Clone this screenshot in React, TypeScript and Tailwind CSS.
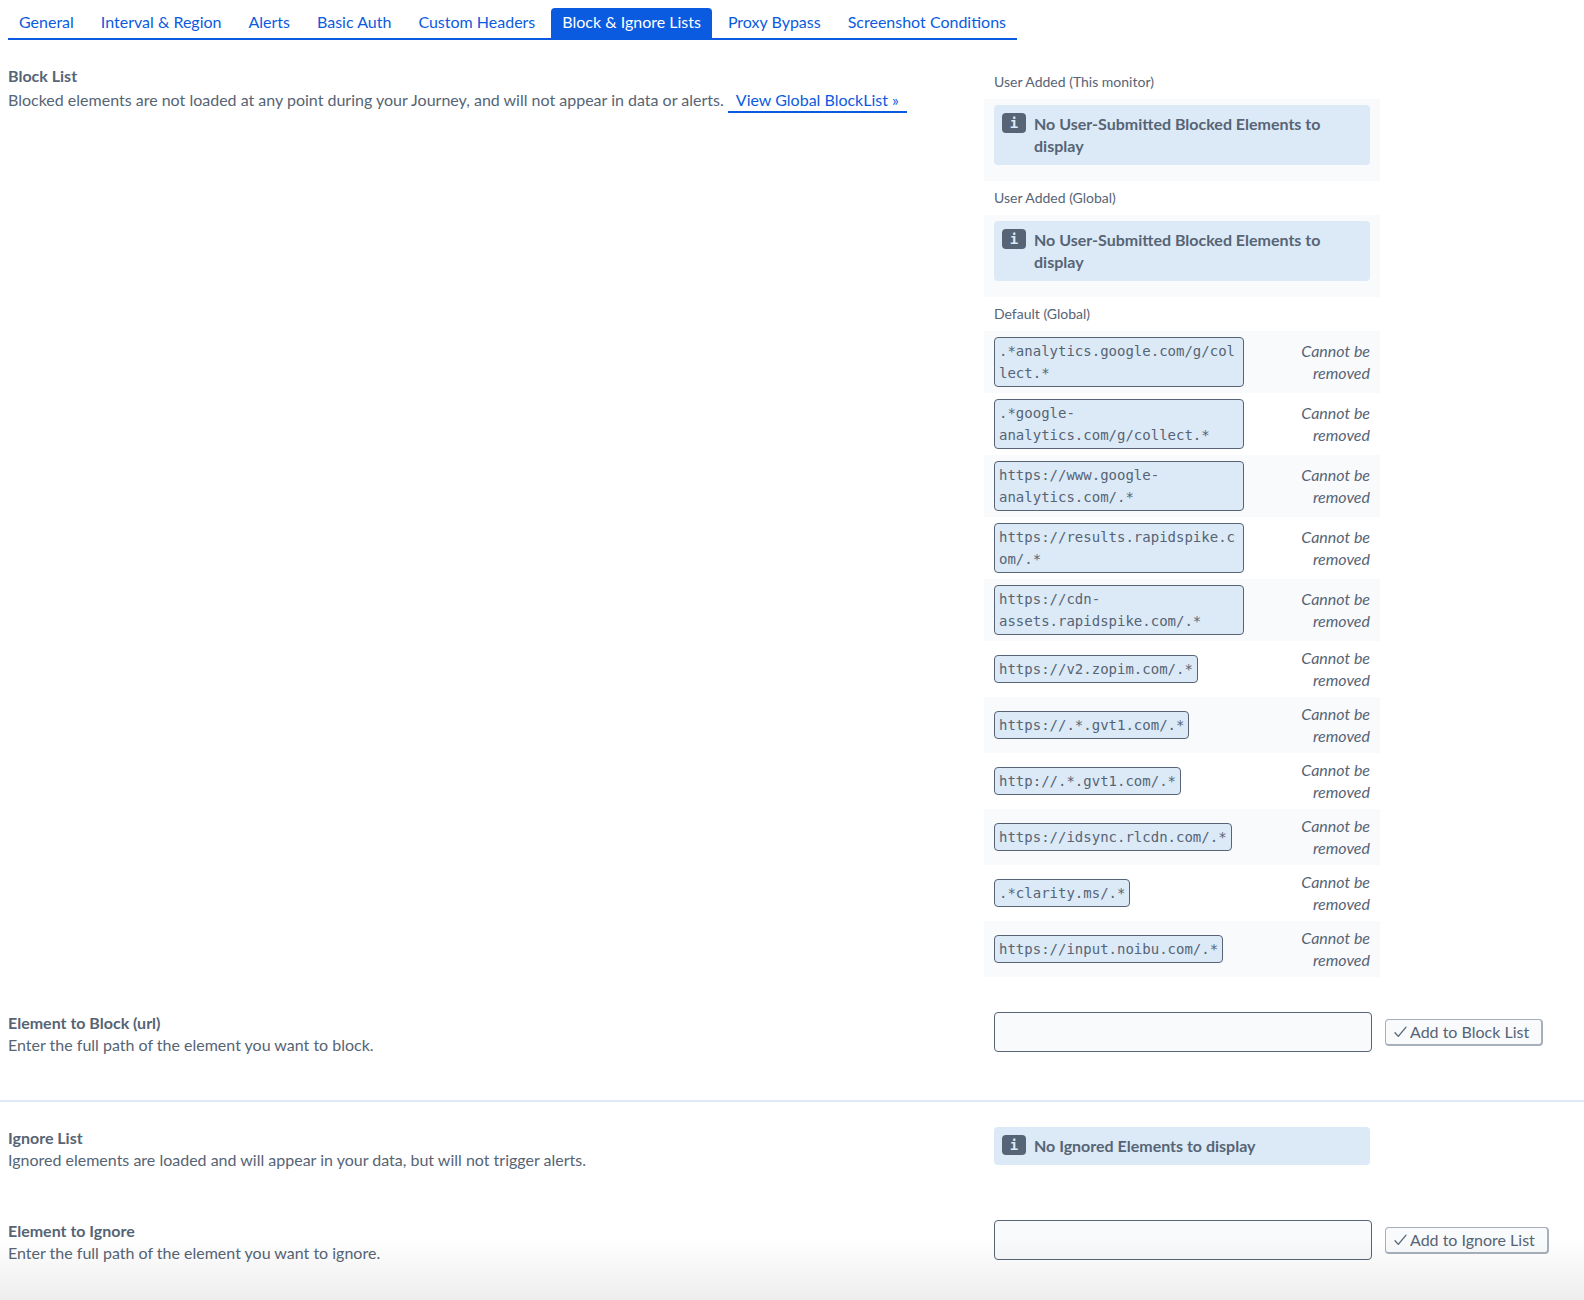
import React, { useState } from "react";

const TABS = [
  "General",
  "Interval & Region",
  "Alerts",
  "Basic Auth",
  "Custom Headers",
  "Block & Ignore Lists",
  "Proxy Bypass",
  "Screenshot Conditions",
];

const DEFAULT_BLOCKS = [
  ".*analytics.google.com/g/collect.*",
  ".*google-analytics.com/g/collect.*",
  "https://www.google-analytics.com/.*",
  "https://results.rapidspike.com/.*",
  "https://cdn-assets.rapidspike.com/.*",
  "https://v2.zopim.com/.*",
  "https://.*.gvt1.com/.*",
  "http://.*.gvt1.com/.*",
  "https://idsync.rlcdn.com/.*",
  ".*clarity.ms/.*",
  "https://input.noibu.com/.*",
];

function InfoAlert({ children }: { children: React.ReactNode }): React.ReactElement {
  return (
    <div className="flex items-start gap-2 rounded bg-[#dceaf7] p-2 font-bold">
      <span
        className="flex h-5 w-6 shrink-0 items-center justify-center rounded bg-[#566475] font-['DejaVu_Sans_Mono',monospace] text-[14px] leading-5 text-[#dceaf7]"
        aria-hidden="true"
      >
        i
      </span>
      <span>{children}</span>
    </div>
  );
}

function GroupHeading({ children }: { children: React.ReactNode }): React.ReactElement {
  return (
    <tr>
      <th colSpan={2} className="px-[10px] py-[6px] text-left text-[14px] leading-[22px] font-normal">
        {children}
      </th>
    </tr>
  );
}

function EmptyGroup(): React.ReactElement {
  return (
    <tr className="bg-[#f9fafc]">
      <td colSpan={2} className="px-[10px] pt-[6px] pb-4">
        <InfoAlert>No User-Submitted Blocked Elements to display</InfoAlert>
      </td>
    </tr>
  );
}

interface AddFieldProps {
  id: string;
  label: string;
  help: string;
  button: string;
}

function AddField({ id, label, help, button }: AddFieldProps): React.ReactElement {
  const [value, setValue] = useState("");

  return (
    <form className="grid grid-cols-[41fr_25fr] items-start" onSubmit={(e) => e.preventDefault()}>
      <div className="pl-2">
        <label htmlFor={id} className="block font-bold">
          {label}
        </label>
        <p id={`${id}-help`}>{help}</p>
      </div>
      <div className="flex items-center">
        <input
          id={id}
          type="text"
          aria-describedby={`${id}-help`}
          className="mr-[13px] ml-[10px] h-10 w-[63%] rounded border border-[#566475] bg-[#f9fafc] px-2 outline-none"
          value={value}
          onChange={(e) => setValue(e.target.value)}
        />
        <button
          type="submit"
          className="flex h-[27px] shrink-0 cursor-pointer items-center gap-[3px] rounded border border-r-2 border-b-2 border-[#a7afba] bg-[#f9fafc] pr-3 pl-2"
        >
          <svg width="13" height="12" viewBox="0 0 13 12" fill="none" aria-hidden="true">
            <path
              d="M1 6.8L4.3 10.4L12 1.2"
              stroke="currentColor"
              strokeWidth="1.3"
              strokeLinecap="round"
              strokeLinejoin="round"
            />
          </svg>
          {button}
        </button>
      </div>
    </form>
  );
}

export default function App(): React.ReactElement {
  const [activeTab, setActiveTab] = useState("Block & Ignore Lists");

  return (
    <div className="relative min-h-screen bg-white pt-2 pb-9 font-['Lato',sans-serif] text-[16px] leading-[22px] text-[#566475]">
      <nav className="px-2">
        <ul className="inline-flex gap-[5px] border-b-2 border-[#0b5be0] align-top" role="tablist">
          {TABS.map((tab) => (
            <li key={tab} role="presentation">
              <button
                type="button"
                role="tab"
                aria-selected={tab === activeTab}
                onClick={() => setActiveTab(tab)}
                className={`block h-[30px] cursor-pointer rounded-t px-[11px] pb-[2px] whitespace-nowrap ${
                  tab === activeTab ? "bg-[#0b5be0] text-white" : "text-[#0b5be0]"
                }`}
              >
                {tab}
              </button>
            </li>
          ))}
        </ul>
      </nav>

      <section className="mt-[25px] grid grid-cols-[41fr_25fr]">
        <div className="pl-2">
          <h2 className="font-bold">Block List</h2>
          <p>
            Blocked elements are not loaded at any point during your Journey, and will not appear in data or alerts.{" "}
            <a href="#global-blocklist" className="inline-block border-b-2 border-[#0b5be0] px-2 pt-[2px] text-[#0b5be0]">
              View Global BlockList »
            </a>
          </p>
        </div>

        <table className="w-[66%] table-fixed border-collapse">
          <colgroup>
            <col className="w-[270px]" />
            <col />
          </colgroup>
          <tbody>
            <GroupHeading>User Added (This monitor)</GroupHeading>
            <EmptyGroup />
            <GroupHeading>User Added (Global)</GroupHeading>
            <EmptyGroup />
            <GroupHeading>Default (Global)</GroupHeading>
            {DEFAULT_BLOCKS.map((pattern) => (
              <tr key={pattern} className="odd:bg-white even:bg-[#f9fafc]">
                <td className="px-[10px] py-[6px]">
                  <code className="inline-block max-w-full rounded border border-[#566475] bg-[#dceaf7] px-1 py-[2px] align-top font-['DejaVu_Sans_Mono',monospace] text-[14px] leading-[22px] break-words">
                    {pattern}
                  </code>
                </td>
                <td className="py-[6px] pr-[10px] pl-8 text-right italic">Cannot be removed</td>
              </tr>
            ))}
          </tbody>
        </table>
      </section>

      <div className="mt-[35px]">
        <AddField
          id="block-url"
          label="Element to Block (url)"
          help="Enter the full path of the element you want to block."
          button="Add to Block List"
        />
      </div>

      <hr className="mt-11 border-t-2 border-[#dceaf7]" />

      <section className="mt-[25px] grid grid-cols-[41fr_25fr]">
        <div className="pl-2">
          <h2 className="font-bold">Ignore List</h2>
          <p>Ignored elements are loaded and will appear in your data, but will not trigger alerts.</p>
        </div>
        <div className="w-[66%] px-[10px]">
          <InfoAlert>No Ignored Elements to display</InfoAlert>
        </div>
      </section>

      <div className="mt-[49px]">
        <AddField
          id="ignore-url"
          label="Element to Ignore"
          help="Enter the full path of the element you want to ignore."
          button="Add to Ignore List"
        />
      </div>

      <div className="pointer-events-none absolute inset-x-0 bottom-0 h-16 bg-linear-to-b from-transparent to-black/7" />
    </div>
  );
}
